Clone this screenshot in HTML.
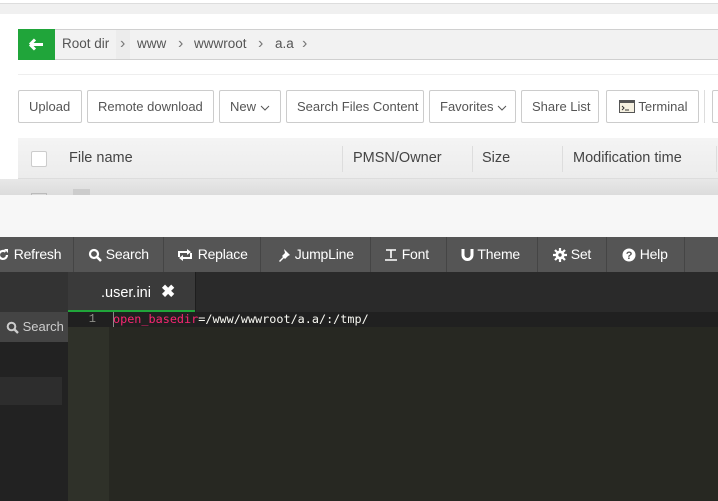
<!DOCTYPE html>
<html><head><meta charset="utf-8"><style>
*{box-sizing:border-box;margin:0;padding:0}
body{width:718px;height:501px;overflow:hidden;position:relative;background:#fff;font-family:"Liberation Sans",sans-serif;font-size:13px}
.abs{position:absolute}
.btn{position:absolute;top:90px;height:33px;border:1px solid #ccc;border-radius:2px;background:#fff;color:#555;line-height:31px;padding:0 10px;white-space:nowrap;font-size:13px}
.bc{position:absolute;top:29px;height:31px;line-height:30px;color:#555;font-size:13.5px}
.chev{color:#777;font-size:16px}
.th{position:absolute;top:138px;height:41px;line-height:41px;color:#444;font-size:14.5px}
.tsep{position:absolute;top:146px;width:1px;height:26px;background:#ddd}
.tb{position:absolute;top:237px;height:35px;line-height:35px;color:#fff;font-size:14px;white-space:nowrap;letter-spacing:-0.2px}
.tbs{position:absolute;top:237px;height:35px;width:1px;background:#454545}
svg{vertical-align:middle}
</style></head><body>
<div class="abs" style="left:0;top:3px;width:718px;height:1px;background:#ddd"></div>
<div class="abs" style="left:0;top:4px;width:718px;height:10px;background:#f0f0f0"></div>
<div class="abs" style="left:18px;top:29px;width:700px;height:31px;background:#f2f2f2;border-top:1px solid #d0d0d0;border-bottom:1px solid #d0d0d0"></div>
<div class="abs" style="left:18px;top:29px;width:37px;height:31px;background:#20a53a"><svg width="37" height="31"><path d="M12 15.5h13M12 15.5l5-5M12 15.5l5 5" stroke="#fff" stroke-width="3" fill="none"/></svg></div>
<div class="abs" style="left:116px;top:30px;width:14px;height:29px;background:#ececec"></div>
<div class="bc" style="left:62px">Root dir</div>
<div class="bc chev" style="left:120px">›</div>
<div class="bc" style="left:137px">www</div>
<div class="bc chev" style="left:178px">›</div>
<div class="bc" style="left:194px">wwwroot</div>
<div class="bc chev" style="left:258px">›</div>
<div class="bc" style="left:275px">a.a</div>
<div class="bc chev" style="left:302px">›</div>
<div class="abs" style="left:18px;top:74px;width:700px;height:1px;background:#eee"></div>
<div class="btn" style="left:18px;width:64px">Upload</div>
<div class="btn" style="left:87px;width:127px">Remote download</div>
<div class="btn" style="left:219px;width:62px">New <svg width="10" height="8"><path d="M1 2l4 4 4-4" stroke="#555" fill="none"/></svg></div>
<div class="btn" style="left:286px;width:138px">Search Files Content</div>
<div class="btn" style="left:429px;width:87px">Favorites <svg width="10" height="8"><path d="M1 2l4 4 4-4" stroke="#555" fill="none"/></svg></div>
<div class="btn" style="left:521px;width:78px">Share List</div>
<div class="btn" style="left:606px;width:93px;padding-left:12px"><svg width="16" height="13" style="margin-top:-3px"><rect x=".5" y=".5" width="15" height="12" fill="#f5f0e0" stroke="#555"/><rect x="1" y="1" width="14" height="2" fill="#555"/><path d="M3 6l2 2-2 2M6 10h4" stroke="#333" fill="none"/></svg> Terminal</div>
<div class="abs" style="left:704px;top:90px;width:1px;height:33px;background:#ddd"></div>
<div class="btn" style="left:712px;width:20px"></div>
<div class="abs" style="left:18px;top:138px;width:700px;height:41px;background:linear-gradient(#f4f4f4,#ececec);border-bottom:1px solid #ddd"></div>
<div class="abs" style="left:31px;top:151px;width:16px;height:16px;border:1px solid #ccc;background:#fff;border-radius:2px"></div>
<div class="th" style="left:69px">File name</div>
<div class="tsep" style="left:342px"></div>
<div class="th" style="left:353px">PMSN/Owner</div>
<div class="tsep" style="left:472px"></div>
<div class="th" style="left:482px">Size</div>
<div class="tsep" style="left:562px"></div>
<div class="th" style="left:573px">Modification time</div>
<div class="tsep" style="left:716px"></div>
<div class="abs" style="left:0;top:179px;width:718px;height:16px;background:linear-gradient(#e8e8e8,#dcdcdc)"></div>
<div class="abs" style="left:31px;top:193px;width:16px;height:3px;border:1px solid #bbb;border-bottom:none"></div>
<div class="abs" style="left:73px;top:189px;width:17px;height:6px;background:#ccc"></div>
<div class="abs" style="left:0;top:195px;width:718px;height:42px;background:#f7f7f7"></div>
<div class="abs" style="left:0;top:237px;width:718px;height:35px;background:#555"></div>
<div class="tb" style="left:-4px"><svg width="14" height="14"><path d="M11 7a4 4 0 1 1-1.5-3.2" stroke="#fff" stroke-width="2.2" fill="none"/><path d="M8 1l4 0 0 4z" fill="#fff"/></svg> Refresh</div>
<div class="tbs" style="left:73px"></div>
<div class="tb" style="left:88px"><svg width="14" height="14"><circle cx="6" cy="6" r="4" stroke="#fff" stroke-width="2.2" fill="none"/><path d="M9 9l4 4" stroke="#fff" stroke-width="2.5"/></svg> Search</div>
<div class="tbs" style="left:163px"></div>
<div class="tb" style="left:177px"><svg width="17" height="14"><path d="M2 9V4h10M14 5v5H4" stroke="#fff" stroke-width="2" fill="none"/><path d="M10 1l4 3-4 3zM6 7l-4 3 4 3z" fill="#fff"/></svg> Replace</div>
<div class="tbs" style="left:260px"></div>
<div class="tb" style="left:276px"><svg width="15" height="14"><path d="M8 1l6 6-2 1-3 3-1-1-4 4-1-1 4-4-1-1 3-3z" fill="#fff"/></svg> JumpLine</div>
<div class="tbs" style="left:370px"></div>
<div class="tb" style="left:384px"><svg width="14" height="14"><path d="M2 2h10M7 2v8M1 12h12" stroke="#fff" stroke-width="1.6"/></svg> Font</div>
<div class="tbs" style="left:446px"></div>
<div class="tb" style="left:461px"><svg width="13" height="14"><path d="M2 1v6a4.5 4.5 0 0 0 9 0V1" stroke="#fff" stroke-width="3" fill="none"/></svg> Theme</div>
<div class="tbs" style="left:537px"></div>
<div class="tb" style="left:553px"><svg width="14" height="14"><circle cx="7" cy="7" r="4.5" fill="#fff"/><path d="M7 0v14M0 7h14M2 2l10 10M12 2L2 12" stroke="#fff" stroke-width="2.2"/><circle cx="7" cy="7" r="1.7" fill="#555"/></svg> Set</div>
<div class="tbs" style="left:606px"></div>
<div class="tb" style="left:622px"><svg width="14" height="14"><circle cx="7" cy="7" r="6.5" fill="#fff"/><text x="7" y="11" text-anchor="middle" font-size="11" font-weight="bold" fill="#555" font-family="Liberation Sans">?</text></svg> Help</div>
<div class="tbs" style="left:684px"></div>
<div class="abs" style="left:0;top:272px;width:68px;height:229px;background:#222"></div>
<div class="abs" style="left:0;top:272px;width:68px;height:40px;background:#333"></div>
<div class="abs" style="left:0;top:312px;width:68px;height:30px;background:#444;color:#ccc;font-size:13px;line-height:30px;padding-left:6px;white-space:nowrap"><svg width="13" height="13"><circle cx="5.5" cy="5.5" r="3.8" stroke="#ccc" stroke-width="2" fill="none"/><path d="M8 8l4 4" stroke="#ccc" stroke-width="2.3"/></svg> Search</div>
<div class="abs" style="left:0;top:377px;width:62px;height:28px;background:#2d2d2d"></div>
<div class="abs" style="left:68px;top:272px;width:650px;height:40px;background:#2a2a2a"></div>
<div class="abs" style="left:68px;top:272px;width:127px;height:38px;background:#3a3a3a;color:#fff;font-size:14.5px;line-height:40px;padding-left:33px">.user.ini <span style="font-weight:bold;font-size:17px;margin-left:6px">✖</span></div>
<div class="abs" style="left:195px;top:272px;width:1px;height:40px;background:#1e1e1e"></div>
<div class="abs" style="left:68px;top:310px;width:127px;height:2px;background:#20a53a"></div>
<div class="abs" style="left:68px;top:312px;width:650px;height:189px;background:#272822"></div>
<div class="abs" style="left:68px;top:312px;width:41px;height:189px;background:#2f3129"></div>
<div class="abs" style="left:68px;top:312px;width:650px;height:15px;background:#202020"></div>
<div class="abs" style="left:68px;top:312px;width:28px;height:15px;color:#8f908a;font-family:'Liberation Mono',monospace;font-size:12px;line-height:15px;text-align:right">1</div>
<div class="abs" style="left:113px;top:312px;width:1px;height:15px;background:#888"></div>
<div class="abs" style="left:113px;top:312px;height:15px;font-family:'DejaVu Sans Mono','Liberation Mono',monospace;font-size:11.8px;line-height:15px;color:#f8f8f2;white-space:pre"><span style="color:#f92672">open_basedir</span>=/www/wwwroot/a.a/:/tmp/</div>
</body></html>
